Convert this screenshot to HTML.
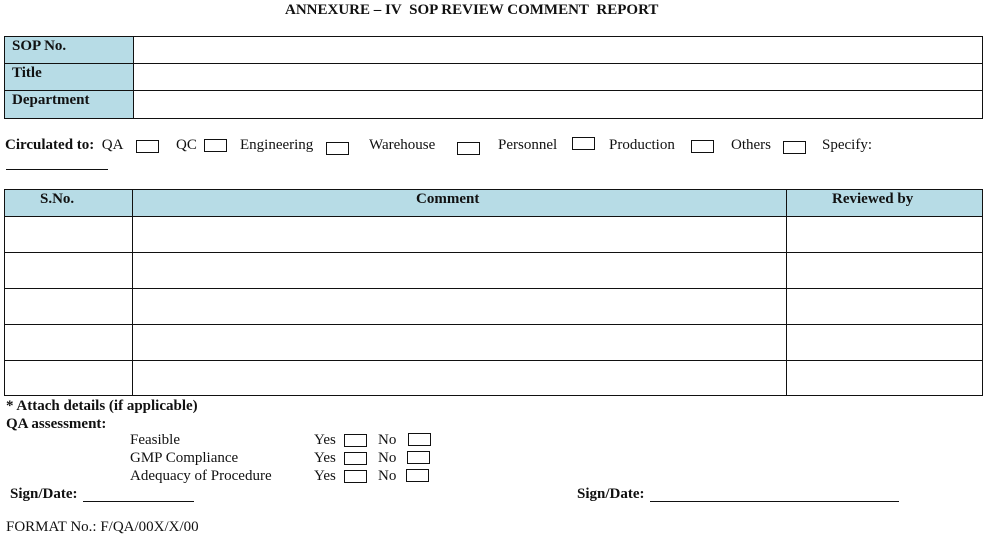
<!DOCTYPE html>
<html><head><style>
body{margin:0;width:983px;height:537px;background:#fff;position:relative;font-family:"Liberation Serif",serif;color:#111;overflow:hidden}
.a{position:absolute;white-space:nowrap}
.b{font-weight:bold}
.cb{position:absolute;border:1px solid #111;width:21px;height:11px}
.bx{position:absolute;border:1px solid #111;box-sizing:border-box}
.bl{background:#b7dce6}
.hl{position:absolute;height:1px;background:#111}
.vl{position:absolute;width:1px;background:#111}
.t{font-size:15px}
</style></head><body>
<div class="a b" style="left:285px;top:2px;font-size:15px">ANNEXURE – IV&nbsp; SOP REVIEW COMMENT&nbsp; REPORT</div>

<div class="bx bl" style="left:4px;top:36px;width:130px;height:83px"></div>
<div class="bx" style="left:4px;top:36px;width:979px;height:83px"></div>
<div class="hl" style="left:4px;top:63px;width:978px"></div>
<div class="hl" style="left:4px;top:90px;width:978px"></div>
<div class="vl" style="left:133px;top:36px;height:82px"></div>
<div class="a b t" style="left:12px;top:38px">SOP No.</div>
<div class="a b t" style="left:12px;top:65px">Title</div>
<div class="a b t" style="left:12px;top:92px">Department</div>

<div class="a t" style="left:5px;top:137px"><b>Circulated to:</b>&nbsp; QA</div>
<div class="cb" style="left:136px;top:140px"></div>
<div class="a t" style="left:176px;top:137px">QC</div>
<div class="cb" style="left:204px;top:139px"></div>
<div class="a t" style="left:240px;top:137px">Engineering</div>
<div class="cb" style="left:326px;top:142px"></div>
<div class="a t" style="left:369px;top:137px">Warehouse</div>
<div class="cb" style="left:457px;top:142px"></div>
<div class="a t" style="left:498px;top:137px">Personnel</div>
<div class="cb" style="left:572px;top:137px"></div>
<div class="a t" style="left:609px;top:137px">Production</div>
<div class="cb" style="left:691px;top:140px"></div>
<div class="a t" style="left:731px;top:137px">Others</div>
<div class="cb" style="left:783px;top:141px"></div>
<div class="a t" style="left:822px;top:137px">Specify:</div>
<div class="hl" style="left:6px;top:169px;width:102px"></div>

<div class="bx bl" style="left:4px;top:189px;width:979px;height:28px"></div>
<div class="bx" style="left:4px;top:189px;width:979px;height:207px"></div>
<div class="hl" style="left:4px;top:216px;width:978px"></div>
<div class="hl" style="left:4px;top:252px;width:978px"></div>
<div class="hl" style="left:4px;top:288px;width:978px"></div>
<div class="hl" style="left:4px;top:324px;width:978px"></div>
<div class="hl" style="left:4px;top:360px;width:978px"></div>
<div class="vl" style="left:132px;top:189px;height:206px"></div>
<div class="vl" style="left:786px;top:189px;height:206px"></div>
<div class="a b t" style="left:40px;top:191px">S.No.</div>
<div class="a b t" style="left:416px;top:191px">Comment</div>
<div class="a b t" style="left:832px;top:191px">Reviewed by</div>

<div class="a b t" style="left:6px;top:398px">* Attach details (if applicable)</div>
<div class="a b t" style="left:6px;top:416px">QA assessment:</div>
<div class="a t" style="left:130px;top:432px">Feasible</div>
<div class="a t" style="left:130px;top:450px">GMP Compliance</div>
<div class="a t" style="left:130px;top:468px">Adequacy of Procedure</div>
<div class="a t" style="left:314px;top:432px">Yes</div>
<div class="a t" style="left:314px;top:450px">Yes</div>
<div class="a t" style="left:314px;top:468px">Yes</div>
<div class="a t" style="left:378px;top:432px">No</div>
<div class="a t" style="left:378px;top:450px">No</div>
<div class="a t" style="left:378px;top:468px">No</div>
<div class="cb" style="left:344px;top:434px"></div>
<div class="cb" style="left:344px;top:452px"></div>
<div class="cb" style="left:344px;top:470px"></div>
<div class="cb" style="left:408px;top:433px"></div>
<div class="cb" style="left:407px;top:451px"></div>
<div class="cb" style="left:406px;top:469px"></div>

<div class="a b t" style="left:10px;top:486px">Sign/Date:</div>
<div class="hl" style="left:83px;top:501px;width:111px"></div>
<div class="a b t" style="left:577px;top:486px">Sign/Date:</div>
<div class="hl" style="left:650px;top:501px;width:249px"></div>
<div class="a t" style="left:6px;top:519px">FORMAT No.: F/QA/00X/X/00</div>
</body></html>
